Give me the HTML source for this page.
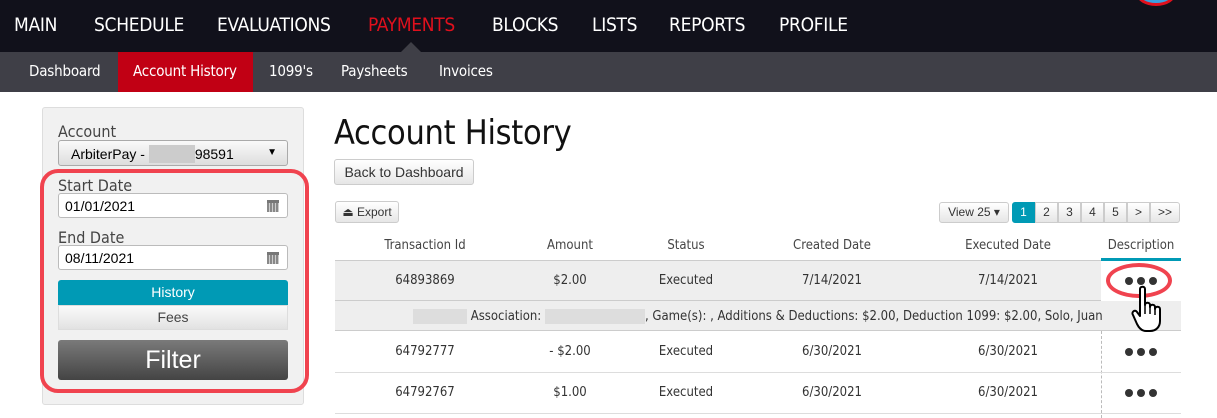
<!DOCTYPE html>
<html><head><style>
*{box-sizing:border-box;margin:0;padding:0}
body{width:1217px;height:418px;overflow:hidden;background:#fff;font-family:"Liberation Sans",sans-serif;position:relative;color:#333}
.a{position:absolute}
.top{left:0;top:0;width:1217px;height:52px;background:#11111b}
.top span{position:absolute;top:14px;font-size:19px;color:#fff;font-family:"DejaVu Sans Condensed","Liberation Sans",sans-serif;letter-spacing:-0.3px}
.sub{left:0;top:52px;width:1217px;height:40px;background:#3f3f47}
.sub span{position:absolute;top:10px;font-size:15px;color:#fff;font-family:"DejaVu Sans Condensed","Liberation Sans",sans-serif;letter-spacing:-0.2px}
.panel{left:42px;top:107px;width:262px;height:298px;background:#f1f1f1;border:1px solid #ddd;border-radius:3px}
.lbl{font-size:16px;color:#444;font-family:"DejaVu Sans Condensed","Liberation Sans",sans-serif}
.inp{background:#fff;border:1px solid #bbb;border-radius:3px;height:25px;width:230px;left:58px;font-size:14px;padding:4px 6px;color:#000}
.cal{position:absolute;right:8px;top:6px;width:12px;height:12px;background:repeating-linear-gradient(90deg,#888 0 2px,#ccc 2px 3px);border-top:3px solid #777}
.th{top:238px;font-size:13px;color:#444;text-align:center;font-family:"DejaVu Sans Condensed","Liberation Sans",sans-serif}
.td{font-size:13px;color:#333;text-align:center;font-family:"DejaVu Sans Condensed","Liberation Sans",sans-serif}
.pg{top:202px;height:21px;border:1px solid #ccc;background:linear-gradient(#fff,#e6e6e6);font-size:12px;text-align:center;line-height:19px;color:#333}
</style></head><body>
<div class="a top">
<span style="left:14px">MAIN</span><span style="left:94px">SCHEDULE</span><span style="left:217px">EVALUATIONS</span><span style="left:368px;color:#e0101d">PAYMENTS</span><span style="left:492px">BLOCKS</span><span style="left:592px">LISTS</span><span style="left:669px">REPORTS</span><span style="left:779px">PROFILE</span>
<div class="a" style="left:1136px;top:-20px;width:40px;height:26px;border-radius:50%;background:#3aa0e0;border:3px solid #e0101d"></div>
</div>
<div class="a" style="left:401px;top:42px;width:0;height:0;border-left:10px solid transparent;border-right:10px solid transparent;border-bottom:10px solid #3f3f47"></div>
<div class="a sub">
<span style="left:29px">Dashboard</span>
<div class="a" style="left:118px;top:0;width:135px;height:40px;background:#c10014"></div>
<span style="left:133px">Account History</span><span style="left:269px">1099's</span><span style="left:341px">Paysheets</span><span style="left:439px">Invoices</span>
</div>
<div class="a panel"></div>
<div class="a lbl" style="left:58px;top:122px">Account</div>
<div class="a" style="left:58px;top:140px;width:230px;height:26px;border:1px solid #aaa;border-radius:3px;background:linear-gradient(#fafafa,#ddd);font-size:14px;padding:5px 12px;color:#000">ArbiterPay - <span style="display:inline-block;width:46px;height:18px;background:#ccc;vertical-align:middle;margin-top:-3px"></span>98591<span style="position:absolute;right:10px;top:6px;font-size:10px">▼</span></div>
<div class="a lbl" style="left:58px;top:176px">Start Date</div>
<div class="a inp" style="top:193px">01/01/2021<div class="cal"></div></div>
<div class="a lbl" style="left:58px;top:228px">End Date</div>
<div class="a inp" style="top:245px">08/11/2021<div class="cal"></div></div>
<div class="a" style="left:58px;top:280px;width:230px;height:25px;background:#009ab5;border-radius:3px 3px 0 0;color:#fff;font-size:14px;text-align:center;line-height:25px">History</div>
<div class="a" style="left:58px;top:305px;width:230px;height:25px;background:linear-gradient(#fafafa,#e2e2e2);border:1px solid #ddd;color:#444;font-size:14px;text-align:center;line-height:23px">Fees</div>
<div class="a" style="left:58px;top:340px;width:230px;height:40px;background:linear-gradient(#7a7a7a,#444);border-radius:3px;color:#fff;font-size:25px;text-align:center;line-height:40px">Filter</div>
<div class="a" style="left:40px;top:169px;width:269px;height:224px;border:4px solid #f0434f;border-radius:18px"></div>

<div class="a" style="left:334px;top:113px;font-size:34px;color:#111;font-family:'DejaVu Sans Condensed','Liberation Sans',sans-serif;letter-spacing:-0.3px">Account History</div>
<div class="a" style="left:334px;top:159px;width:140px;height:26px;border:1px solid #ccc;border-radius:3px;background:linear-gradient(#fff,#e6e6e6);font-size:14px;line-height:24px;text-align:center">Back to Dashboard</div>
<div class="a" style="left:335px;top:201px;width:64px;height:22px;border:1px solid #ccc;border-radius:3px;background:linear-gradient(#fff,#e6e6e6);font-size:12px;line-height:20px;text-align:center">⏏ Export</div>
<div class="a pg" style="left:939px;width:70px;border-radius:3px">View 25 ▾</div>
<div class="a pg" style="left:1012px;width:23px;background:#009ab5;color:#fff;border-color:#009ab5;border-radius:3px 0 0 3px">1</div>
<div class="a pg" style="left:1035px;width:23px">2</div>
<div class="a pg" style="left:1058px;width:23px">3</div>
<div class="a pg" style="left:1081px;width:23px">4</div>
<div class="a pg" style="left:1104px;width:23px">5</div>
<div class="a pg" style="left:1127px;width:23px">&gt;</div>
<div class="a pg" style="left:1150px;width:30px;border-radius:0 3px 3px 0">&gt;&gt;</div>

<div class="a th" style="left:365px;width:120px">Transaction Id</div>
<div class="a th" style="left:520px;width:100px">Amount</div>
<div class="a th" style="left:636px;width:100px">Status</div>
<div class="a th" style="left:772px;width:120px">Created Date</div>
<div class="a th" style="left:948px;width:120px">Executed Date</div>
<div class="a th" style="left:1101px;width:80px">Description</div>
<div class="a" style="left:335px;top:260px;width:846px;height:1px;background:#ccc"></div>
<div class="a" style="left:1101px;top:258px;width:80px;height:3px;background:#009ab5"></div>
<div class="a" style="left:335px;top:261px;width:766px;height:40px;background:#eee;border-bottom:1px solid #ccc"></div>
<div class="a" style="left:1101px;top:261px;width:80px;height:40px;background:#fff"></div>
<div class="a" style="left:335px;top:301px;width:846px;height:30px;background:#eee;border-bottom:1px solid #ccc"></div>
<div class="a td" style="left:365px;top:273px;width:120px">64893869</div>
<div class="a td" style="left:520px;top:273px;width:100px">$2.00</div>
<div class="a td" style="left:636px;top:273px;width:100px">Executed</div>
<div class="a td" style="left:772px;top:273px;width:120px">7/14/2021</div>
<div class="a td" style="left:948px;top:273px;width:120px">7/14/2021</div>
<svg class="a" style="left:1124px;top:276px" width="34" height="10"><circle cx="5" cy="5" r="4" fill="#333"/><circle cx="17" cy="5" r="4" fill="#333"/><circle cx="29" cy="5" r="4" fill="#333"/></svg>
<div class="a" style="left:1106px;top:263px;width:66px;height:35px;border:4px solid #f0434f;border-radius:50%"></div>
<div class="a td" style="left:413px;top:309px;white-space:nowrap"><span style="display:inline-block;width:54px;height:15px;background:#ddd;vertical-align:middle"></span> Association: <span style="display:inline-block;width:100px;height:15px;background:#ddd;vertical-align:middle"></span>, Game(s): , Additions &amp; Deductions: $2.00, Deduction 1099: $2.00, Solo, Juan</div>
<svg class="a" style="left:1130px;top:285px" width="42" height="50" viewBox="0 0 42 50"><path d="M10 4c0-3 5-3 5 0v16c0-3 5-3 5 0v2c0-3 5-3 5 0v2c0-3 5-3 5 0v12c0 6-4 10-10 10h-4c-4 0-7-3-9-7L3 30c-2-3 2-6 4-3l3 4z" fill="#fff" stroke="#000" stroke-width="2" stroke-linejoin="round"/><path d="M15 20v9M20 22v7M25 24v6" stroke="#000" stroke-width="1.5"/></svg>
<div class="a" style="left:1101px;top:331px;width:0;height:87px;border-left:1px dashed #bbb"></div>
<div class="a td" style="left:365px;top:344px;width:120px">64792777</div>
<div class="a td" style="left:520px;top:344px;width:100px">- $2.00</div>
<div class="a td" style="left:636px;top:344px;width:100px">Executed</div>
<div class="a td" style="left:772px;top:344px;width:120px">6/30/2021</div>
<div class="a td" style="left:948px;top:344px;width:120px">6/30/2021</div>
<svg class="a" style="left:1124px;top:347px" width="34" height="10"><circle cx="5" cy="5" r="4" fill="#333"/><circle cx="17" cy="5" r="4" fill="#333"/><circle cx="29" cy="5" r="4" fill="#333"/></svg>
<div class="a" style="left:335px;top:372px;width:846px;height:1px;background:#ddd"></div>
<div class="a td" style="left:365px;top:385px;width:120px">64792767</div>
<div class="a td" style="left:520px;top:385px;width:100px">$1.00</div>
<div class="a td" style="left:636px;top:385px;width:100px">Executed</div>
<div class="a td" style="left:772px;top:385px;width:120px">6/30/2021</div>
<div class="a td" style="left:948px;top:385px;width:120px">6/30/2021</div>
<svg class="a" style="left:1124px;top:388px" width="34" height="10"><circle cx="5" cy="5" r="4" fill="#333"/><circle cx="17" cy="5" r="4" fill="#333"/><circle cx="29" cy="5" r="4" fill="#333"/></svg>
<div class="a" style="left:335px;top:413px;width:846px;height:1px;background:#ddd"></div>
</body></html>
